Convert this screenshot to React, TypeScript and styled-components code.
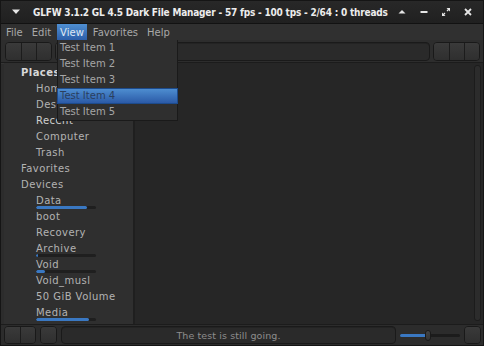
import React from 'react';
import styled, { createGlobalStyle } from 'styled-components';

const Global = createGlobalStyle`
  html, body { margin: 0; padding: 0; background: #2b2b2b; }
  body { width: 484px; height: 346px; overflow: hidden; font-family: "DejaVu Sans", sans-serif; }
  * { box-sizing: border-box; }
`;

const Window = styled.div`
  position: relative;
  width: 484px;
  height: 346px;
  display: flex;
  flex-direction: column;
  background: #2c2c2c;
  border: 1px solid #151515;
`;

const TitleBar = styled.div`
  height: 23px;
  flex: none;
  display: flex;
  align-items: center;
  background: linear-gradient(#282828, #202020);
  border-bottom: 1px solid #121212;
  padding: 0 10px 0 11px;
  color: #ececec;
`;

const TitleText = styled.div`
  flex: 1;
  min-width: 0;
  margin-left: 13px;
  font-family: "DejaVu Sans Condensed", "DejaVu Sans", sans-serif;
  font-stretch: condensed;
  font-weight: bold;
  font-size: 10px;
  letter-spacing: -0.2px;
  white-space: nowrap;
`;

const TitleIcons = styled.div`
  display: flex;
  align-items: center;
  gap: 12px;
  flex: none;
`;

const MenuBar = styled.div`
  height: 16px;
  flex: none;
  display: flex;
  align-items: stretch;
  background: #303030;
  padding-left: 2px;
  gap: 3px;
`;

const MenuItem = styled.div<{ $active?: boolean }>`
  padding: 0 3px;
  display: flex;
  align-items: center;
  font-size: 10px;
  color: ${p => (p.$active ? '#dfe8f4' : '#a9a9a9')};
  background: ${p => (p.$active ? 'linear-gradient(#4f8fd2, #2c5ea9)' : 'transparent')};
`;

const Toolbar = styled.div`
  height: 23px;
  flex: none;
  display: flex;
  align-items: flex-start;
  padding: 2px 3px 0 4px;
  gap: 3px;
  background: #2d2d2d;
  border-bottom: 1px solid #1c1c1c;
  box-shadow: 0 1px 0 #353535;
`;

const Group = styled.div`
  display: flex;
  border: 1px solid #191919;
  border-radius: 4px;
  overflow: hidden;
  flex: none;
`;

const Btn = styled.div<{ $w?: number; $h?: number }>`
  width: ${p => p.$w ?? 15}px;
  height: ${p => p.$h ?? 17}px;
  background: linear-gradient(#3a3a3a, #2f2f2f);
  & + & { border-left: 1px solid #1c1c1c; }
`;

const Field = styled.div<{ $h?: number }>`
  flex: 1;
  height: ${p => p.$h ?? 19}px;
  border: 1px solid #1a1a1a;
  border-radius: 4px;
  background: #2a2a2a;
  box-shadow: inset 0 1px 0 #232323;
  display: flex;
  align-items: center;
  justify-content: center;
  font-size: 9.5px;
  letter-spacing: 0.1px;
  color: #8d8d8d;
`;

const Body = styled.div`
  flex: 1;
  display: flex;
  min-height: 0;
  padding-left: 3px;
`;

const Sidebar = styled.div`
  width: 131px;
  flex: none;
  background: #2f2f2f;
  border-right: 2px solid #1f1f1f;
  padding-top: 2px;
`;

const Row = styled.div<{ $indent: number; $bold?: boolean; $bright?: boolean }>`
  position: relative;
  height: 16px;
  line-height: 16px;
  padding-left: ${p => p.$indent}px;
  font-size: 10px;
  letter-spacing: 0.45px;
  font-weight: ${p => (p.$bold ? 'bold' : 'normal')};
  color: ${p => (p.$bold ? '#d8d8d8' : p.$bright ? '#d0d0d0' : '#b3b3b3')};
  white-space: nowrap;
`;

const Bar = styled.div`
  position: absolute;
  left: 32px;
  bottom: 0;
  width: 60px;
  height: 3px;
  border-radius: 2px;
  background: #1f1f1f;
  overflow: hidden;
`;

const BarFill = styled.div`
  height: 100%;
  border-radius: 2px;
  background: #3a78c2;
`;

const Main = styled.div`
  flex: 1;
  background: #262626;
  display: flex;
  justify-content: flex-end;
  padding: 2px 2px 3px 0;
`;

const ScrollTrack = styled.div`
  width: 7px;
  border: 1px solid #1c1c1c;
  border-radius: 3px;
  background: #2c2c2c;
`;

const StatusBar = styled.div`
  height: 21px;
  flex: none;
  display: flex;
  align-items: center;
  gap: 4px;
  padding: 0 2px 0 3px;
  background: #2c2c2c;
  border-top: 1px solid #1c1c1c;
`;

const Slider = styled.div`
  position: relative;
  width: 60px;
  height: 3px;
  border-radius: 2px;
  background: #1c1c1c;
  flex: none;
`;

const SliderFill = styled.div`
  height: 100%;
  border-radius: 2px;
  background: #3a78c2;
`;

const Knob = styled.div`
  position: absolute;
  top: -4px;
  width: 6px;
  height: 11px;
  border-radius: 3px;
  border: 1px solid #1a1a1a;
  background: linear-gradient(#444, #333);
  transform: translateX(-3px);
`;

const Dropdown = styled.div`
  position: absolute;
  left: 56px;
  top: 39px;
  width: 121px;
  background: #2f2f2f;
  border: 1px solid #1a1a1a;
  border-top: none;
`;

const DropItem = styled.div<{ $active?: boolean }>`
  height: 16px;
  line-height: ${p => (p.$active ? 14 : 16)}px;
  padding-left: 2px;
  font-size: 10px;
  color: ${p => (p.$active ? '#2a3f5e' : '#a6a6a6')};
  background: ${p => (p.$active ? 'linear-gradient(#4d8dd0, #2b5aa7)' : 'transparent')};
  border: ${p => (p.$active ? '1px solid #1d4b8c' : 'none')};
  margin: ${p => (p.$active ? '0 -1px' : '0')};
`;

type Item = { label: string; indent: number; bold?: boolean; bright?: boolean; bar?: number };

const items: Item[] = [
  { label: 'Places', indent: 17, bold: true },
  { label: 'Home', indent: 32 },
  { label: 'Desktop', indent: 32 },
  { label: 'Recent', indent: 32, bright: true },
  { label: 'Computer', indent: 32 },
  { label: 'Trash', indent: 32 },
  { label: 'Favorites', indent: 17 },
  { label: 'Devices', indent: 17 },
  { label: 'Data', indent: 32, bar: 0.85 },
  { label: 'boot', indent: 32 },
  { label: 'Recovery', indent: 32 },
  { label: 'Archive', indent: 32, bar: 0.03 },
  { label: 'Void', indent: 32, bar: 0.15 },
  { label: 'Void_musl', indent: 32 },
  { label: '50 GiB Volume', indent: 32 },
  { label: 'Media', indent: 32, bar: 0.88 },
];

const Icon = ({ children, w = 10 }: { children: React.ReactNode; w?: number }) => (
  <svg width={w} height={10} viewBox="0 0 10 10" fill="none" stroke="#e6e6e6" strokeWidth={1.6}>
    {children}
  </svg>
);

export default function App() {
  return (
    <>
      <Global />
      <Window>
        <TitleBar>
          <svg width="8" height="6" viewBox="0 0 8 6"><path d="M0 0.5 L8 0.5 L4 5 Z" fill="#e6e6e6" /></svg>
          <TitleText>GLFW 3.1.2 GL 4.5 Dark File Manager - 57 fps - 100 tps - 2/64 : 0 threads</TitleText>
          <TitleIcons>
            <Icon><path d="M1.5 6.5 L5 3 L8.5 6.5 Z" fill="#e6e6e6" stroke="none" /></Icon>
            <Icon><path d="M1.5 5 H8.5" strokeWidth={2} /></Icon>
            <Icon>
              <path d="M5.5 1 H9 V4.5 Z M1 5.5 V9 H4.5 Z" fill="#e6e6e6" stroke="none" />
              <path d="M8 2 L6 4 M2 8 L4 6" strokeWidth={1.2} />
            </Icon>
            <Icon><path d="M2 2 L8 8 M8 2 L2 8" strokeWidth={1.8} /></Icon>
          </TitleIcons>
        </TitleBar>
        <MenuBar>
          <MenuItem>File</MenuItem>
          <MenuItem>Edit</MenuItem>
          <MenuItem $active>View</MenuItem>
          <MenuItem>Favorites</MenuItem>
          <MenuItem>Help</MenuItem>
        </MenuBar>
        <Toolbar>
          <Group><Btn /><Btn /><Btn /></Group>
          <Group><Btn /></Group>
          <Field />
          <Group><Btn /><Btn /><Btn /></Group>
        </Toolbar>
        <Body>
          <Sidebar>
            {items.map(it => (
              <Row key={it.label} $indent={it.indent} $bold={it.bold} $bright={it.bright}>
                {it.label}
                {it.bar !== undefined && (
                  <Bar><BarFill style={{ width: `${it.bar * 100}%` }} /></Bar>
                )}
              </Row>
            ))}
          </Sidebar>
          <Main><ScrollTrack /></Main>
        </Body>
        <StatusBar>
          <Group><Btn $h={16} /><Btn $h={16} /></Group>
          <Group><Btn $h={16} /></Group>
          <Field $h={18}>The test is still going.</Field>
          <Slider>
            <SliderFill style={{ width: '47%' }} />
            <Knob style={{ left: '47%' }} />
          </Slider>
          <Group><Btn $h={16} /></Group>
        </StatusBar>
        <Dropdown>
          <DropItem>Test Item 1</DropItem>
          <DropItem>Test Item 2</DropItem>
          <DropItem>Test Item 3</DropItem>
          <DropItem $active>Test Item 4</DropItem>
          <DropItem>Test Item 5</DropItem>
        </Dropdown>
      </Window>
    </>
  );
}
